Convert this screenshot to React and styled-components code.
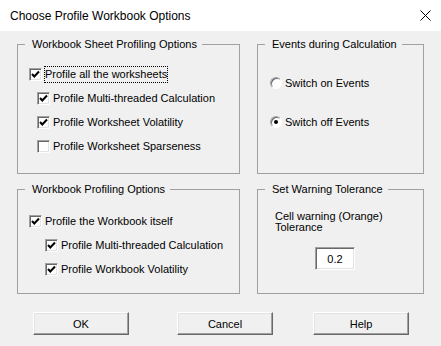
import React from 'react';
import styled, { createGlobalStyle } from 'styled-components';

const GlobalStyle = createGlobalStyle`
  html, body {
    margin: 0;
    padding: 0;
    background: #f0f0f0;
  }
  * {
    box-sizing: border-box;
  }
`;

const Window = styled.div`
  width: 441px;
  height: 346px;
  background: #f0f0f0;
  display: flex;
  flex-direction: column;
  font-family: "Liberation Sans", Arial, sans-serif;
  font-size: 11px;
  color: #000;
  overflow: hidden;
`;

const TitleBar = styled.div`
  height: 31px;
  background: #fff;
  display: flex;
  align-items: center;
  justify-content: space-between;
  padding: 0 10px 0 10px;
  font-size: 12px;
`;

const CloseIcon = styled.svg`
  width: 11px;
  height: 11px;
`;

const Body = styled.div`
  padding: 13px 0 0 17px;
  display: grid;
  grid-template-columns: 223px 167px;
  grid-template-rows: 130px 105px;
  column-gap: 17px;
  row-gap: 15px;
`;

const GroupBox = styled.div`
  position: relative;
  border: 1px solid #a0a0a0;
  padding: ${(p) => p.$pad || '0'};
  display: flex;
  flex-direction: column;
`;

const Legend = styled.span`
  position: absolute;
  top: -7px;
  left: 7px;
  line-height: 13px;
  padding: 0 5px 0 7px;
  background: #f0f0f0;
  white-space: nowrap;
`;

const OptionRow = styled.div`
  height: 24px;
  margin-top: ${(p) => p.$mt || 0}px;
  display: flex;
  align-items: center;
  padding-left: ${(p) => p.$indent || 0}px;
`;

const CheckBox = styled.span`
  width: 13px;
  height: 13px;
  flex: none;
  background: #fff;
  border-top: 1px solid #a0a0a0;
  border-left: 1px solid #a0a0a0;
  border-right: 1px solid #fff;
  border-bottom: 1px solid #fff;
  box-shadow: inset 1px 1px 0 #696969, inset -1px -1px 0 #e3e3e3;
  display: flex;
  align-items: center;
  justify-content: center;
`;

const Radio = styled.span`
  width: 12px;
  height: 12px;
  flex: none;
  border-radius: 50%;
  background: #fff;
  border: 1px solid;
  border-color: #a0a0a0 #fff #fff #a0a0a0;
  box-shadow: inset 1px 1px 0 #696969;
  display: flex;
  align-items: center;
  justify-content: center;
`;

const Dot = styled.span`
  width: 4px;
  height: 4px;
  border-radius: 50%;
  background: #000;
`;

const Label = styled.span`
  margin-left: 2px;
  padding: 2px 1px 2px 1px;
  line-height: 13px;
  white-space: nowrap;
  outline: ${(p) => (p.$focused ? '1px dotted #000' : 'none')};
  outline-offset: -1px;
`;

const Note = styled.div`
  padding: 21px 0 0 17px;
  line-height: 11px;
`;

const TextBox = styled.div`
  margin: 14px 0 0 57px;
  width: 40px;
  height: 23px;
  background: #fff;
  border: 1px solid;
  border-color: #a0a0a0 #fff #fff #a0a0a0;
  box-shadow: inset 1px 1px 0 #696969, inset -1px -1px 0 #e3e3e3;
  display: flex;
  align-items: center;
  justify-content: center;
`;

const ButtonRow = styled.div`
  display: flex;
  padding: 18px 0 0 33px;
`;

const Button = styled.div`
  width: 96px;
  height: 23px;
  margin-left: ${(p) => p.$gap || 0}px;
  background: #f0f0f0;
  border-top: 1px solid #fff;
  border-left: 1px solid #fff;
  border-right: 1px solid #696969;
  border-bottom: 1px solid #696969;
  box-shadow: inset -1px -1px 0 #a0a0a0, inset 1px 1px 0 #e3e3e3;
  display: flex;
  align-items: center;
  justify-content: center;
`;

const Check = () => (
  <svg width="9" height="9" viewBox="0 0 9 9">
    <path d="M1 4 L3.3 6.5 L8 1.5" fill="none" stroke="#000" strokeWidth="2" />
  </svg>
);

const CheckOption = ({ label, checked, indent, focused }) => (
  <OptionRow $indent={indent}>
    <CheckBox>{checked && <Check />}</CheckBox>
    <Label $focused={focused}>{label}</Label>
  </OptionRow>
);

const RadioOption = ({ label, selected, mt }) => (
  <OptionRow $mt={mt}>
    <Radio>{selected && <Dot />}</Radio>
    <Label>{label}</Label>
  </OptionRow>
);

const App = () => (
  <Window>
    <GlobalStyle />
    <TitleBar>
      <span>Choose Profile Workbook Options</span>
      <CloseIcon viewBox="0 0 11 11">
        <path d="M0.5 0.5 L10.5 10.5 M10.5 0.5 L0.5 10.5" stroke="#000" strokeWidth="1" />
      </CloseIcon>
    </TitleBar>
    <Body>
      <GroupBox $pad="17px 0 0 11px">
        <Legend>Workbook Sheet Profiling Options</Legend>
        <CheckOption label="Profile all the worksheets" checked focused />
        <CheckOption label="Profile Multi-threaded Calculation" checked indent={8} />
        <CheckOption label="Profile Worksheet Volatility" checked indent={8} />
        <CheckOption label="Profile Worksheet Sparseness" indent={8} />
      </GroupBox>
      <GroupBox $pad="26px 0 0 12px">
        <Legend>Events during Calculation</Legend>
        <RadioOption label="Switch on Events" />
        <RadioOption label="Switch off Events" selected mt={15} />
      </GroupBox>
      <GroupBox $pad="19px 0 0 11px">
        <Legend>Workbook Profiling Options</Legend>
        <CheckOption label="Profile the Workbook itself" checked />
        <CheckOption label="Profile Multi-threaded Calculation" checked indent={16} />
        <CheckOption label="Profile Workbook Volatility" checked indent={16} />
      </GroupBox>
      <GroupBox>
        <Legend>Set Warning Tolerance</Legend>
        <Note>
          Cell warning (Orange)
          <br />
          Tolerance
        </Note>
        <TextBox>0.2</TextBox>
      </GroupBox>
    </Body>
    <ButtonRow>
      <Button>OK</Button>
      <Button $gap={48}>Cancel</Button>
      <Button $gap={40}>Help</Button>
    </ButtonRow>
  </Window>
);

export default App;
